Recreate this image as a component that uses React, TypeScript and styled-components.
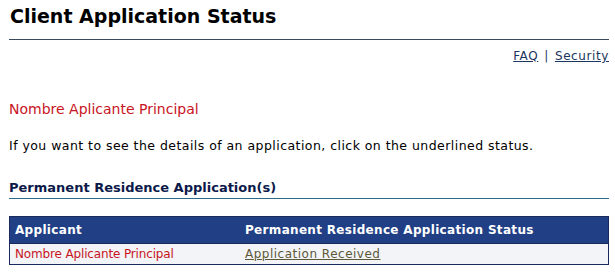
import React from 'react'
import styled, { createGlobalStyle } from 'styled-components'

const GlobalStyle = createGlobalStyle`
  body {
    margin: 0;
    background: #ffffff;
    font-family: Verdana, "DejaVu Sans", sans-serif;
  }
`

const Page = styled.div`
  width: 600px;
  padding: 0 6px 0 9px;
`

const Title = styled.h1`
  margin: 0;
  padding: 5px 0 0 1px;
  font-size: 19px;
  line-height: 22px;
  font-weight: bold;
  color: #000000;
  height: 34px;
  border-bottom: 1px solid #3a4a5c;
`

const TopLinks = styled.div`
  display: flex;
  justify-content: flex-end;
  gap: 6px;
  margin-top: 8px;
  font-size: 12px;
  line-height: 16px;
  letter-spacing: 0.6px;
  color: #1c3660;
`

const TopLink = styled.a`
  color: #1c3660;
  text-decoration: underline;
`

const ApplicantName = styled.div`
  margin-top: 36px;
  font-size: 14px;
  line-height: 18px;
  color: #c8141e;
`

const Intro = styled.p`
  margin: 20px 0 0;
  font-size: 12.5px;
  line-height: 16px;
  letter-spacing: 0.45px;
  color: #000000;
`

const SectionHeading = styled.h2`
  margin: 26px 0 0;
  padding-bottom: 2px;
  font-size: 13px;
  line-height: 16px;
  font-weight: bold;
  color: #0c1a4a;
  border-bottom: 1px solid #2a6b86;
`

const Table = styled.table`
  margin-top: 17px;
  width: 100%;
  table-layout: fixed;
  border-collapse: collapse;
  border: 1px solid #1a2a5c;
`

const HeadCell = styled.th<{ $width?: number }>`
  background: #213f85;
  color: #ffffff;
  text-align: left;
  font-size: 12px;
  letter-spacing: 0.32px;
  font-weight: bold;
  height: 26px;
  padding: 0 5px;
  width: ${(p) => (p.$width ? `${p.$width}px` : 'auto')};
`

const BodyRow = styled.tr`
  background: #f2f4f8;
  border-top: 1px solid #1a2a5c;
`

const Cell = styled.td`
  font-size: 12px;
  height: 20px;
  padding: 0 5px;
  color: #c8141e;
  letter-spacing: -0.15px;
`

const StatusLink = styled.a`
  color: #5e5838;
  text-decoration: underline;
  letter-spacing: 0.5px;
`

export default function App() {
  return (
    <Page>
      <GlobalStyle />
      <Title>Client Application Status</Title>
      <TopLinks>
        <TopLink href="#">FAQ</TopLink>
        <span>|</span>
        <TopLink href="#">Security</TopLink>
      </TopLinks>
      <ApplicantName>Nombre Aplicante Principal</ApplicantName>
      <Intro>
        If you want to see the details of an application, click on the underlined status.
      </Intro>
      <SectionHeading>Permanent Residence Application(s)</SectionHeading>
      <Table>
        <thead>
          <tr>
            <HeadCell $width={220}>Applicant</HeadCell>
            <HeadCell>Permanent Residence Application Status</HeadCell>
          </tr>
        </thead>
        <tbody>
          <BodyRow>
            <Cell>Nombre Aplicante Principal</Cell>
            <Cell>
              <StatusLink href="#">Application Received</StatusLink>
            </Cell>
          </BodyRow>
        </tbody>
      </Table>
    </Page>
  )
}
